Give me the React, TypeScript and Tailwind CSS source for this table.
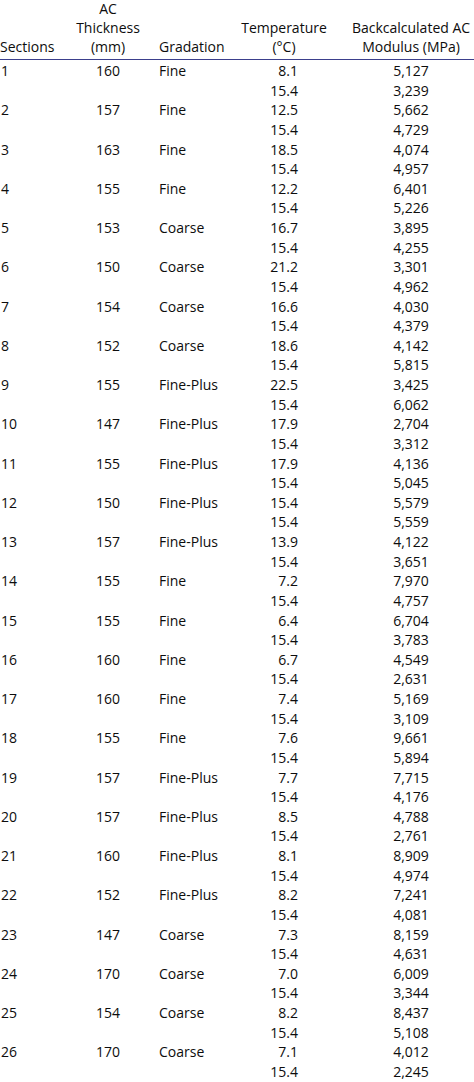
import React from "react";

type Row = [string, string, string, string, string, string, string];

const rows: Row[] = [
  ["1", "160", "Fine", "8.1", "5,127", "15.4", "3,239"],
  ["2", "157", "Fine", "12.5", "5,662", "15.4", "4,729"],
  ["3", "163", "Fine", "18.5", "4,074", "15.4", "4,957"],
  ["4", "155", "Fine", "12.2", "6,401", "15.4", "5,226"],
  ["5", "153", "Coarse", "16.7", "3,895", "15.4", "4,255"],
  ["6", "150", "Coarse", "21.2", "3,301", "15.4", "4,962"],
  ["7", "154", "Coarse", "16.6", "4,030", "15.4", "4,379"],
  ["8", "152", "Coarse", "18.6", "4,142", "15.4", "5,815"],
  ["9", "155", "Fine-Plus", "22.5", "3,425", "15.4", "6,062"],
  ["10", "147", "Fine-Plus", "17.9", "2,704", "15.4", "3,312"],
  ["11", "155", "Fine-Plus", "17.9", "4,136", "15.4", "5,045"],
  ["12", "150", "Fine-Plus", "15.4", "5,579", "15.4", "5,559"],
  ["13", "157", "Fine-Plus", "13.9", "4,122", "15.4", "3,651"],
  ["14", "155", "Fine", "7.2", "7,970", "15.4", "4,757"],
  ["15", "155", "Fine", "6.4", "6,704", "15.4", "3,783"],
  ["16", "160", "Fine", "6.7", "4,549", "15.4", "2,631"],
  ["17", "160", "Fine", "7.4", "5,169", "15.4", "3,109"],
  ["18", "155", "Fine", "7.6", "9,661", "15.4", "5,894"],
  ["19", "157", "Fine-Plus", "7.7", "7,715", "15.4", "4,176"],
  ["20", "157", "Fine-Plus", "8.5", "4,788", "15.4", "2,761"],
  ["21", "160", "Fine-Plus", "8.1", "8,909", "15.4", "4,974"],
  ["22", "152", "Fine-Plus", "8.2", "7,241", "15.4", "4,081"],
  ["23", "147", "Coarse", "7.3", "8,159", "15.4", "4,631"],
  ["24", "170", "Coarse", "7.0", "6,009", "15.4", "3,344"],
  ["25", "154", "Coarse", "8.2", "8,437", "15.4", "5,108"],
  ["26", "170", "Coarse", "7.1", "4,012", "15.4", "2,245"],
];

function Line({ a, b, c, d, e }: { a: string; b: string; c: string; d: string; e: string }) {
  return (
    <div className="flex h-[19.63px] items-center leading-[19.63px] whitespace-nowrap">
      <div className="w-[70px] pl-[1px]">{a}</div>
      <div className="w-[76px] text-center">{b}</div>
      <div className="w-[94px] pl-[13px]">{c}</div>
      <div className="w-[88px] pr-[30px] text-right">{d}</div>
      <div className="w-[146px] pl-[20px] text-center">{e}</div>
    </div>
  );
}

export default function App() {
  return (
    <div
      className="w-[474px] bg-white text-[14px] text-[#0d0d0d] overflow-hidden"
      style={{ fontFamily: '"Open Sans", "Noto Sans", sans-serif' }}
    >
      <div className="flex h-[60px] items-end border-b border-[#3b3f8c] pb-[3px] leading-[19px] whitespace-nowrap">
        <div className="w-[70px]">Sections</div>
        <div className="w-[76px] text-center">
          <div>AC</div>
          <div>Thickness</div>
          <div>(mm)</div>
        </div>
        <div className="w-[94px] pl-[13px]">Gradation</div>
        <div className="w-[88px] text-center">
          <div>Temperature</div>
          <div>(°C)</div>
        </div>
        <div className="w-[146px] pl-[20px] text-center">
          <div>Backcalculated AC</div>
          <div>Modulus (MPa)</div>
        </div>
      </div>
      <div className="pt-[1px]">
        {rows.map((r) => (
          <React.Fragment key={r[0]}>
            <Line a={r[0]} b={r[1]} c={r[2]} d={r[3]} e={r[4]} />
            <Line a="" b="" c="" d={r[5]} e={r[6]} />
          </React.Fragment>
        ))}
      </div>
    </div>
  );
}
